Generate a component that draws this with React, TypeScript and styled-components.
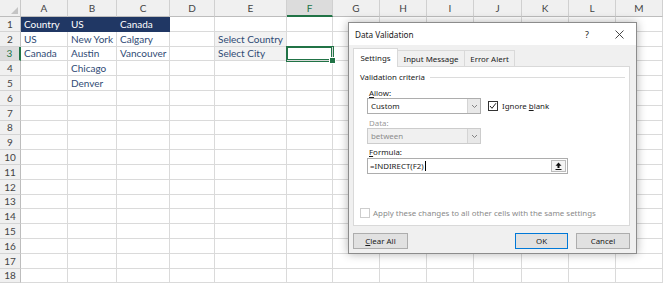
import React from "react";
import styled, { createGlobalStyle, css } from "styled-components";

const GlobalStyle = createGlobalStyle`
  html, body {
    margin: 0;
    padding: 0;
    background: #fff;
  }
  body {
    width: 663px;
    height: 286px;
    overflow: hidden;
  }
`;

const COLS = ["A", "B", "C", "D", "E", "F", "G", "H", "I", "J", "K", "L", "M"];
const WIDTHS = [47, 49, 53, 45, 72, 46, 47, 47, 47, 48, 47, 47, 47];
const ROW_COUNT = 18;
const ACTIVE_COL = "F";
const ACTIVE_ROW = 3;

type Fill = "navy" | "grey";
type CellData = { text?: string; fill?: Fill };

const DATA: Record<string, CellData> = {
  A1: { text: "Country", fill: "navy" },
  B1: { text: "US", fill: "navy" },
  C1: { text: "Canada", fill: "navy" },
  A2: { text: "US" },
  B2: { text: "New York" },
  C2: { text: "Calgary" },
  E2: { text: "Select Country", fill: "grey" },
  A3: { text: "Canada" },
  B3: { text: "Austin" },
  C3: { text: "Vancouver" },
  E3: { text: "Select City", fill: "grey" },
  B4: { text: "Chicago" },
  B5: { text: "Denver" },
};

const Page = styled.div`
  position: relative;
  width: 663px;
  height: 286px;
  overflow: hidden;
  background: #fff;
`;

const Sheet = styled.div`
  display: grid;
  grid-template-columns: 21px ${WIDTHS.map((w) => `${w}px`).join(" ")};
  grid-template-rows: 17px repeat(${ROW_COUNT}, 14.8px);
  font-family: Lato, "Liberation Sans", sans-serif;
  font-size: 10px;
`;

const Corner = styled.div`
  position: relative;
  background: #f0f0f0;
  border-right: 1px solid #c8c8c8;
  border-bottom: 1px solid #bdbdbd;
  box-sizing: border-box;

  &::after {
    content: "";
    position: absolute;
    right: 2px;
    bottom: 2px;
    border-style: solid;
    border-width: 0 0 7px 7px;
    border-color: transparent transparent #c4c4c4 transparent;
  }
`;

const ColHeader = styled.div<{ $active?: boolean }>`
  display: flex;
  align-items: center;
  justify-content: center;
  box-sizing: border-box;
  background: ${(p) => (p.$active ? "#dcdcdc" : "#f0f0f0")};
  color: ${(p) => (p.$active ? "#217346" : "#444")};
  border-right: 1px solid #d0d0d0;
  border-bottom: ${(p) => (p.$active ? "2px solid #217346" : "1px solid #bdbdbd")};
`;

const RowHeader = styled.div<{ $active?: boolean }>`
  display: flex;
  align-items: center;
  justify-content: center;
  box-sizing: border-box;
  background: ${(p) => (p.$active ? "#dcdcdc" : "#f0f0f0")};
  color: ${(p) => (p.$active ? "#217346" : "#444")};
  border-bottom: 1px solid #d4d4d4;
  border-right: ${(p) => (p.$active ? "2px solid #217346" : "1px solid #bdbdbd")};
`;

const fills: Record<Fill, ReturnType<typeof css>> = {
  navy: css`
    background: #203764;
    color: #fff;
    border-color: #203764;
  `,
  grey: css`
    background: #f2f2f2;
    color: #2f4a74;
  `,
};

const Cell = styled.div<{ $fill?: Fill; $selected?: boolean }>`
  position: relative;
  display: flex;
  align-items: center;
  padding: 0 3px;
  box-sizing: border-box;
  white-space: nowrap;
  color: #2f4a74;
  border-right: 1px solid #dadada;
  border-bottom: 1px solid #dadada;
  ${(p) => p.$fill && fills[p.$fill]}
  ${(p) =>
    p.$selected &&
    css`
      box-shadow: 0 0 0 1px #217346, inset 0 0 0 1px #217346;
      z-index: 1;

      &::after {
        content: "";
        position: absolute;
        right: -4px;
        bottom: -4px;
        width: 5px;
        height: 5px;
        background: #217346;
        border: 1px solid #fff;
      }
    `}
`;

/* ---------- dialog ---------- */

const Dialog = styled.div`
  position: absolute;
  left: 348px;
  top: 22px;
  width: 289px;
  height: 232px;
  box-sizing: border-box;
  display: flex;
  flex-direction: column;
  border: 1px solid #8c8c8c;
  background: #f0f0f0;
  box-shadow: 0 0 9px rgba(0, 0, 0, 0.3);
  font-family: "Noto Sans", "Open Sans", sans-serif;
  font-size: 7.9px;
  color: #1a1a1a;
  z-index: 5;
`;

const TitleBar = styled.div`
  height: 22px;
  flex: none;
  display: flex;
  align-items: center;
  background: #fff;
  padding-left: 6px;
`;

const Title = styled.span`
  flex: 1;
  font-size: 8.2px;
`;

const TitleButtons = styled.div`
  display: flex;
  align-items: center;
  gap: 6px;
  margin-right: 3px;
`;

const TitleButton = styled.div<{ $width: number }>`
  width: ${(p) => p.$width}px;
  height: 18px;
  display: flex;
  align-items: center;
  justify-content: center;
  font-size: 9px;
  color: #222;
`;

const DialogBody = styled.div`
  flex: 1;
  display: flex;
  flex-direction: column;
  padding: 3px 6px 4px 4px;
`;

const TabStrip = styled.div`
  display: flex;
  align-items: flex-end;
  height: 18px;
`;

const Tab = styled.div<{ $active?: boolean; $width: number }>`
  width: ${(p) => p.$width}px;
  box-sizing: border-box;
  display: flex;
  align-items: center;
  justify-content: center;
  border: 1px solid #d9d9d9;
  border-bottom: none;
  margin-left: -1px;
  ${(p) =>
    p.$active
      ? css`
          height: 19px;
          margin-bottom: -1px;
          margin-left: 0;
          background: #fff;
          position: relative;
          z-index: 1;
        `
      : css`
          height: 16px;
          background: #f0f0f0;
        `}
`;

const TabPanel = styled.div`
  height: 160px;
  box-sizing: border-box;
  border: 1px solid #d9d9d9;
  background: #fff;
  padding: 4px 4px 7px 6px;
  display: flex;
  flex-direction: column;
`;

const GroupHeading = styled.div`
  height: 12px;
  display: flex;
  align-items: center;
  gap: 5px;
`;

const Rule = styled.div`
  flex: 1;
  height: 1px;
  background: #dcdcdc;
`;

const FieldBlock = styled.div`
  margin-left: 7px;
  display: flex;
  flex-direction: column;
  align-items: flex-start;
`;

const FieldLabel = styled.div<{ $gap: number; $disabled?: boolean }>`
  height: 11px;
  margin-top: ${(p) => p.$gap}px;
  padding-left: 2px;
  display: flex;
  align-items: center;
  color: ${(p) => (p.$disabled ? "#9a9a9a" : "#1a1a1a")};
`;

const FieldRow = styled.div`
  display: flex;
  align-items: center;
  gap: 7px;
`;

const Select = styled.div<{ $disabled?: boolean }>`
  width: 114px;
  height: 16px;
  box-sizing: border-box;
  display: flex;
  align-items: center;
  border: 1px solid ${(p) => (p.$disabled ? "#cccccc" : "#adadad")};
  background: ${(p) => (p.$disabled ? "#f0f0f0" : "#fff")};
  color: ${(p) => (p.$disabled ? "#8d8d8d" : "#1a1a1a")};
`;

const SelectText = styled.span`
  flex: 1;
  padding-left: 3px;
`;

const DropButton = styled.div<{ $disabled?: boolean }>`
  width: 12px;
  height: 100%;
  display: flex;
  align-items: center;
  justify-content: center;
  border-left: 1px solid #d4d4d4;
  background: ${(p) => (p.$disabled ? "#e8e8e8" : "#e9e9e9")};
`;

const CheckLabel = styled.label<{ $disabled?: boolean; $gap: number }>`
  display: flex;
  align-items: center;
  gap: ${(p) => p.$gap}px;
  color: ${(p) => (p.$disabled ? "#8a8a8a" : "#1a1a1a")};
`;

const CheckBox = styled.span<{ $disabled?: boolean }>`
  width: 10px;
  height: 10px;
  box-sizing: border-box;
  display: flex;
  align-items: center;
  justify-content: center;
  background: #fff;
  border: 1px solid ${(p) => (p.$disabled ? "#cdcdcd" : "#333")};
`;

const FormulaBox = styled.div`
  width: 201px;
  height: 16px;
  margin-top: 1px;
  box-sizing: border-box;
  display: flex;
  align-items: center;
  border: 1px solid #adadad;
  background: #fff;
`;

const FormulaText = styled.span`
  flex: 1;
  display: flex;
  align-items: center;
  padding-left: 2px;
`;

const Caret = styled.span`
  width: 1px;
  height: 10px;
  margin-left: 1px;
  background: #000;
`;

const RefButton = styled.div`
  width: 15px;
  height: 12px;
  margin-right: 1px;
  box-sizing: border-box;
  display: flex;
  align-items: center;
  justify-content: center;
  border: 1px solid #bcbcbc;
  background: #f4f4f4;
`;

const ApplyRow = styled.div`
  margin-top: auto;
  height: 10px;
  display: flex;
  align-items: center;
`;

const ButtonRow = styled.div`
  margin-top: 7px;
  display: flex;
  align-items: center;
  gap: 8px;
`;

const Spacer = styled.div`
  flex: 1;
`;

const DlgButton = styled.button<{ $width: number; $primary?: boolean }>`
  width: ${(p) => p.$width}px;
  height: 16px;
  padding: 0;
  box-sizing: border-box;
  font: inherit;
  color: #1a1a1a;
  background: #e1e1e1;
  border: 1px solid ${(p) => (p.$primary ? "#0078d7" : "#adadad")};
`;

const Chevron = () => (
  <svg width="7" height="5" viewBox="0 0 7 5">
    <polyline points="1,1 3.5,3.5 6,1" fill="none" stroke="#777" strokeWidth="0.9" />
  </svg>
);

const CheckMark = () => (
  <svg width="8" height="8" viewBox="0 0 8 8">
    <polyline points="1,4 3,6.3 7,1.2" fill="none" stroke="#222" strokeWidth="1" />
  </svg>
);

const CloseIcon = () => (
  <svg width="9" height="9" viewBox="0 0 9 9">
    <path d="M0.5 0.5 L8.5 8.5 M8.5 0.5 L0.5 8.5" stroke="#333" strokeWidth="0.9" />
  </svg>
);

const RefIcon = () => (
  <svg width="7" height="8" viewBox="0 0 7 8">
    <path d="M3.5 0.5 L6.5 3.8 L4.5 3.8 L4.5 6 L2.5 6 L2.5 3.8 L0.5 3.8 Z" fill="#111" />
    <rect x="0.5" y="7" width="6" height="1" fill="#111" />
  </svg>
);

function SpreadSheet() {
  const rows = Array.from({ length: ROW_COUNT }, (_, i) => i + 1);
  return (
    <Sheet>
      <Corner />
      {COLS.map((c) => (
        <ColHeader key={c} $active={c === ACTIVE_COL}>
          {c}
        </ColHeader>
      ))}
      {rows.map((r) => (
        <React.Fragment key={r}>
          <RowHeader $active={r === ACTIVE_ROW}>{r}</RowHeader>
          {COLS.map((c) => {
            const ref = `${c}${r}`;
            const d = DATA[ref];
            return (
              <Cell
                key={ref}
                $fill={d?.fill}
                $selected={c === ACTIVE_COL && r === ACTIVE_ROW}
              >
                {d?.text}
              </Cell>
            );
          })}
        </React.Fragment>
      ))}
    </Sheet>
  );
}

function DataValidationDialog() {
  return (
    <Dialog>
      <TitleBar>
        <Title>Data Validation</Title>
        <TitleButtons>
          <TitleButton $width={24}>?</TitleButton>
          <TitleButton $width={28}>
            <CloseIcon />
          </TitleButton>
        </TitleButtons>
      </TitleBar>
      <DialogBody>
        <TabStrip>
          <Tab $active $width={45}>
            Settings
          </Tab>
          <Tab $width={68}>Input Message</Tab>
          <Tab $width={51}>Error Alert</Tab>
        </TabStrip>
        <TabPanel>
          <GroupHeading>
            <span>Validation criteria</span>
            <Rule />
          </GroupHeading>
          <FieldBlock>
            <FieldLabel $gap={4}>
              <u>A</u>llow:
            </FieldLabel>
            <FieldRow>
              <Select>
                <SelectText>Custom</SelectText>
                <DropButton>
                  <Chevron />
                </DropButton>
              </Select>
              <CheckLabel $gap={4}>
                <CheckBox>
                  <CheckMark />
                </CheckBox>
                <span>
                  Ignore <u>b</u>lank
                </span>
              </CheckLabel>
            </FieldRow>
            <FieldLabel $gap={3} $disabled>
              Data:
            </FieldLabel>
            <Select $disabled>
              <SelectText>between</SelectText>
              <DropButton $disabled>
                <Chevron />
              </DropButton>
            </Select>
            <FieldLabel $gap={2}>
              <u>F</u>ormula:
            </FieldLabel>
            <FormulaBox>
              <FormulaText>
                =INDIRECT(F2)
                <Caret />
              </FormulaText>
              <RefButton>
                <RefIcon />
              </RefButton>
            </FormulaBox>
          </FieldBlock>
          <ApplyRow>
            <CheckLabel $disabled $gap={3}>
              <CheckBox $disabled />
              <span>Apply these changes to all other cells with the same settings</span>
            </CheckLabel>
          </ApplyRow>
        </TabPanel>
        <ButtonRow>
          <DlgButton $width={55}>
            <u>C</u>lear All
          </DlgButton>
          <Spacer />
          <DlgButton $width={53} $primary>
            OK
          </DlgButton>
          <DlgButton $width={54}>Cancel</DlgButton>
        </ButtonRow>
      </DialogBody>
    </Dialog>
  );
}

export default function App() {
  return (
    <Page>
      <GlobalStyle />
      <SpreadSheet />
      <DataValidationDialog />
    </Page>
  );
}
